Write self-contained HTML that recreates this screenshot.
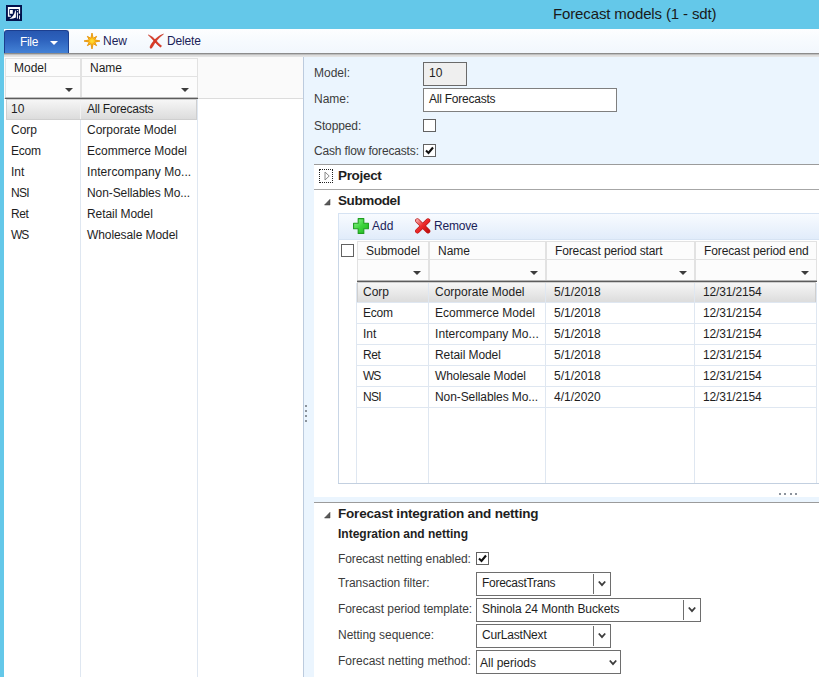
<!DOCTYPE html>
<html><head><meta charset="utf-8"><title>Forecast models (1 - sdt)</title>
<style>
html,body{margin:0;padding:0;}
body{width:819px;height:677px;overflow:hidden;background:#64c8e9;font-family:"Liberation Sans",sans-serif;font-size:12px;color:#1e1e1e;position:relative;}
.a{position:absolute;}
.t{position:absolute;white-space:nowrap;line-height:16px;}
.b{font-weight:bold;}
#title{left:553px;top:5px;font-size:15px;letter-spacing:-0.13px;line-height:18px;color:#1a1a1a;}
#toolbar{left:4px;top:29px;width:815px;height:24px;background:linear-gradient(#fdfeff,#f6fafe 55%,#f2f7fd);}
#tbline{left:4px;top:53px;width:815px;height:5px;background:linear-gradient(#8c8c8c 0,#8c8c8c 20%,#bebebe 20%,#bebebe 40%,#dcdcdc 40%,#dcdcdc 60%,#e2e2e2 60%,#e2e2e2 80%,#e9e9e9 80%);}
#file{left:4px;top:30px;width:65px;height:23px;border-radius:3px 3px 0 0;background:linear-gradient(#2757b0,#2d62bd 40%,#4482d6);border:1px solid #1c3f8f;border-bottom:none;box-sizing:border-box;}
#left{left:4px;top:57px;width:299px;height:620px;background:#fff;}
#lefthdr{left:4px;top:57px;width:299px;height:41px;background:#fafafa;border-bottom:1px solid #dcdcdc;}
#right{left:303px;top:57px;width:516px;height:620px;background:#ebf5fe;border-left:1px solid #bccbde;box-sizing:border-box;}
.hc{position:absolute;background:#fcfcfc;border:1px solid #e2e2e2;box-sizing:border-box;}
.vl{position:absolute;width:1px;background:#dfe7f1;}
.hl{position:absolute;height:1px;background:#dfe7f1;}
.sel{position:absolute;background:linear-gradient(#f6f6f6,#dcdcdc);border:1px solid #cfcfcf;box-sizing:border-box;}
.arr{position:absolute;width:0;height:0;border-left:4px solid transparent;border-right:4px solid transparent;border-top:4px solid #3c3c3c;}
.inp{position:absolute;box-sizing:border-box;border:1px solid #7f7f7f;background:#fff;}
.cb{position:absolute;box-sizing:border-box;width:12px;height:12px;border:1px solid #626262;background:#fff;}
</style></head><body>
<!-- title bar -->
<svg class="a" style="left:6px;top:5px" width="16" height="16" viewBox="0 0 16 16"><rect width="16" height="16" fill="#02124c"/><path d="M1.9 2h12.2v6.8h-1.3V4H3.3v6.5h1.5v1.3H1.9z" fill="#fff"/><rect x="4" y="5" width="2.8" height="3.8" fill="#fff"/><path d="M9.2 5.2 C9.6 5.2 9.9 5.6 9.9 6.2 L9.9 12.4 C8.4 13 6 13.6 3.2 14 C6.6 12.2 8.6 9.4 9.2 5.2Z" fill="#fff"/><circle cx="11.4" cy="5.5" r="0.6" fill="#fff"/><rect x="10.9" y="7.3" width="1" height="6.4" rx="0.4" fill="#fff"/><rect x="13" y="10" width="0.9" height="4.3" rx="0.4" fill="#fff"/></svg>
<div class="t" id="title">Forecast models (1 - sdt)</div>
<!-- toolbar -->
<div class="a" id="toolbar"></div>
<div class="a" id="tbline"></div>
<div class="a" id="file"></div>
<div class="t" style="left:20px;top:34px;letter-spacing:-0.336px;color:#fff;">File</div>
<div class="arr" style="left:50px;top:41px;border-top-color:#fff;"></div>
<svg class="a" style="left:84px;top:33px" width="16" height="16" viewBox="0 0 16 16"><defs><radialGradient id="sg" cx="50%" cy="50%" r="50%"><stop offset="0" stop-color="#ffe23a"/><stop offset="0.35" stop-color="#ffc21a"/><stop offset="0.7" stop-color="#ef9a08"/><stop offset="1" stop-color="#d98400"/></radialGradient></defs><polygon points="8.00,0.00 9.15,5.23 12.67,3.33 10.77,6.85 16.00,8.00 10.77,9.15 12.67,12.67 9.15,10.77 8.00,16.00 6.85,10.77 3.33,12.67 5.23,9.15 0.00,8.00 5.23,6.85 3.33,3.33 6.85,5.23" fill="url(#sg)" stroke="#e8960a" stroke-width="0.9" stroke-linejoin="round"/></svg>
<div class="t" style="left:103px;top:33px;color:#1b2258;">New</div>
<svg class="a" style="left:148px;top:33px" width="16" height="16" viewBox="0 0 16 16"><path d="M0.2,1.9 C3.2,2.6 6.2,5.4 8.4,8 C10.4,10.3 12.2,12 13.6,12.8 L12.6,14.2 C10.4,12.8 8.4,10.7 6.7,8.7 C4.9,6.7 2.7,3.9 0.2,1.9Z" fill="#d93a26" stroke="#c62c1c" stroke-width="0.5"/><path d="M15.5,1.1 C11.2,2.4 7,6 4.4,9.6 C2.9,11.7 1.7,13.8 2.1,14.9 C2.6,15.8 3.9,15 4.6,13.7 C6.4,10.2 10.2,5 15.5,1.1Z" fill="#dc3a25" stroke="#bb2a1b" stroke-width="0.5"/></svg>
<div class="t" style="left:167px;top:33px;letter-spacing:-0.148px;color:#1b2258;">Delete</div>
<!-- left pane -->
<div class="a" id="left"></div>
<div class="a" id="lefthdr"></div>
<div class="hc" style="left:5px;top:58px;width:76px;height:19px;"></div>
<div class="hc" style="left:81px;top:58px;width:117px;height:19px;"></div>
<div class="hc" style="left:5px;top:77px;width:76px;height:21px;border-top:none;"></div>
<div class="hc" style="left:81px;top:77px;width:117px;height:21px;border-top:none;"></div>
<div class="t" style="left:14px;top:60px;">Model</div>
<div class="t" style="left:90px;top:60px;">Name</div>
<div class="arr" style="left:65px;top:88px;"></div>
<div class="arr" style="left:181px;top:88px;"></div>
<div class="vl" style="left:80px;top:99px;height:578px;"></div>
<div class="vl" style="left:197px;top:99px;height:578px;"></div>
<div class="a" style="left:5px;top:97px;width:193px;height:2px;background:linear-gradient(#bdbdbd 50%,#5c5c5c 50%);"></div>
<div class="sel" style="left:6px;top:99px;width:191px;height:21px;"></div>
<div class="a" style="left:80px;top:100px;width:1px;height:19px;background:#f2f2f2;"></div>
<div class="t" style="left:11px;top:101px;">10</div>
<div class="t" style="left:87px;top:101px;letter-spacing:-0.235px;">All Forecasts</div>
<div class="t" style="left:11px;top:122px;letter-spacing:0.009px;">Corp</div>
<div class="t" style="left:87px;top:122px;">Corporate Model</div>
<div class="t" style="left:11px;top:143px;letter-spacing:-0.222px;">Ecom</div>
<div class="t" style="left:87px;top:143px;">Ecommerce Model</div>
<div class="t" style="left:11px;top:164px;">Int</div>
<div class="t" style="left:87px;top:164px;letter-spacing:0.088px;">Intercompany Mo...</div>
<div class="t" style="left:11px;top:185px;letter-spacing:-0.655px;">NSI</div>
<div class="t" style="left:87px;top:185px;letter-spacing:-0.088px;">Non-Sellables Mo...</div>
<div class="t" style="left:11px;top:206px;letter-spacing:-0.462px;">Ret</div>
<div class="t" style="left:87px;top:206px;letter-spacing:-0.075px;">Retail Model</div>
<div class="t" style="left:11px;top:227px;letter-spacing:-1.022px;">WS</div>
<div class="t" style="left:87px;top:227px;letter-spacing:-0.083px;">Wholesale Model</div>
<div class="a" id="right"></div>
<div class="t" style="left:314px;top:65px;color:#3c3c3c;">Model:</div>
<div class="inp" style="left:423px;top:62px;width:44px;height:24px;background:#efefef;border-color:#6a6a6a;"></div>
<div class="t" style="left:429px;top:65px;">10</div>
<div class="t" style="left:314px;top:91px;color:#3c3c3c;">Name:</div>
<div class="inp" style="left:423px;top:88px;width:194px;height:24px;"></div>
<div class="t" style="left:429px;top:91px;letter-spacing:-0.235px;">All Forecasts</div>
<div class="t" style="left:314px;top:118px;letter-spacing:-0.118px;color:#3c3c3c;">Stopped:</div>
<div class="cb" style="left:423px;top:119px;width:13px;height:13px;"></div>
<div class="t" style="left:314px;top:143px;letter-spacing:-0.162px;color:#3c3c3c;">Cash flow forecasts:</div>
<div class="cb" style="left:423px;top:144px;width:13px;height:13px;"></div>
<svg class="a" style="left:423px;top:144px" width="13" height="13" viewBox="0 0 13 13"><path d="M3 6.5 L5.5 9 L10 3.5" fill="none" stroke="#111" stroke-width="2.1"/></svg>
<div class="a" style="left:314px;top:164px;width:505px;height:1px;background:#9b9b9b;"></div>
<div class="a" style="left:314px;top:165px;width:505px;height:332px;background:#fff;"></div>
<div class="a" style="left:319px;top:169px;width:14px;height:14px;box-sizing:border-box;border:1px dotted #222;"></div>
<svg class="a" style="left:319px;top:169px" width="14" height="14" viewBox="0 0 14 14"><path d="M6 3 L10.2 7 L6 11Z" fill="#fff" stroke="#8a8a8a" stroke-width="1"/></svg>
<div class="t b" style="left:338px;top:167.6px;letter-spacing:-0.319px;font-size:13.5px;">Project</div>
<div class="a" style="left:314px;top:189px;width:505px;height:1px;background:#a6a6a6;"></div>
<svg class="a" style="left:324px;top:199px" width="7" height="7" viewBox="0 0 7 7"><path d="M6 0.3 L6 6 L0.5 6Z" fill="#5a5a5a" stroke="#3a3a3a" stroke-width="0.5"/></svg>
<div class="t b" style="left:338px;top:192.6px;letter-spacing:-0.402px;font-size:13.5px;">Submodel</div>
<div class="a" style="left:338px;top:213px;width:481px;height:27px;box-sizing:border-box;border:1px solid #d6e3f3;border-right:none;background:linear-gradient(#f8fbff,#e1ecfa);"></div>
<svg class="a" style="left:353px;top:218px" width="16" height="16" viewBox="0 0 16 16"><defs><linearGradient id="pg" x1="0" y1="0" x2="1" y2="1"><stop offset="0" stop-color="#9af59a"/><stop offset="0.5" stop-color="#3ed63e"/><stop offset="1" stop-color="#1fb51f"/></linearGradient></defs><path d="M5.2 0.6h5.6v4.6h4.6v5.6h-4.6v4.6H5.2v-4.6H0.6V5.2h4.6z" fill="url(#pg)" stroke="#1e9e1e" stroke-width="1.1" stroke-linejoin="round"/></svg>
<div class="t" style="left:372px;top:218px;color:#1b2258;">Add</div>
<svg class="a" style="left:414px;top:218px" width="17" height="16" viewBox="0 0 17 16"><defs><linearGradient id="xg" x1="0" y1="0" x2="1" y2="1"><stop offset="0" stop-color="#f59a9a"/><stop offset="0.45" stop-color="#ee2a2a"/><stop offset="1" stop-color="#c41010"/></linearGradient></defs><g fill="none" stroke-linecap="round"><path d="M3.4 2.6L14 13.2M14 2.6L3.4 13.2" stroke="#b81818" stroke-width="4.6"/><path d="M3.4 2.6L14 13.2M14 2.6L3.4 13.2" stroke="url(#xg)" stroke-width="3.4"/></g></svg>
<div class="t" style="left:434px;top:218px;letter-spacing:-0.190px;color:#1b2258;">Remove</div>
<div class="vl" style="left:338px;top:240px;height:243px;background:#c9d6e6;"></div>
<div class="cb" style="left:341px;top:244px;width:13px;height:13px;"></div>
<div class="hc" style="left:357px;top:241px;width:72px;height:19px;"></div>
<div class="hc" style="left:357px;top:260px;width:72px;height:21px;border-top:none;"></div>
<div class="t" style="left:366px;top:243px;">Submodel</div>
<div class="arr" style="left:413px;top:271px;"></div>
<div class="hc" style="left:429px;top:241px;width:117px;height:19px;"></div>
<div class="hc" style="left:429px;top:260px;width:117px;height:21px;border-top:none;"></div>
<div class="t" style="left:438px;top:243px;">Name</div>
<div class="arr" style="left:530px;top:271px;"></div>
<div class="hc" style="left:546px;top:241px;width:149px;height:19px;"></div>
<div class="hc" style="left:546px;top:260px;width:149px;height:21px;border-top:none;"></div>
<div class="t" style="left:555px;top:243px;letter-spacing:-0.126px;">Forecast period start</div>
<div class="arr" style="left:679px;top:271px;"></div>
<div class="hc" style="left:695px;top:241px;width:122px;height:19px;"></div>
<div class="hc" style="left:695px;top:260px;width:122px;height:21px;border-top:none;"></div>
<div class="t" style="left:704px;top:243px;letter-spacing:-0.115px;">Forecast period end</div>
<div class="arr" style="left:801px;top:271px;"></div>
<div class="a" style="left:357px;top:280px;width:460px;height:2px;background:linear-gradient(#b4b4b4 50%,#5c5c5c 50%);"></div>
<div class="sel" style="left:357px;top:282px;width:459px;height:21px;"></div>
<div class="vl" style="left:356px;top:283px;height:200px;"></div>
<div class="vl" style="left:428px;top:283px;height:200px;"></div>
<div class="vl" style="left:545px;top:283px;height:200px;"></div>
<div class="vl" style="left:694px;top:283px;height:200px;"></div>
<div class="vl" style="left:816px;top:283px;height:200px;"></div>
<div class="hl" style="left:357px;top:302px;width:460px;"></div>
<div class="hl" style="left:357px;top:323px;width:460px;"></div>
<div class="hl" style="left:357px;top:344px;width:460px;"></div>
<div class="hl" style="left:357px;top:365px;width:460px;"></div>
<div class="hl" style="left:357px;top:386px;width:460px;"></div>
<div class="hl" style="left:357px;top:407px;width:460px;"></div>
<div class="hl" style="left:338px;top:483px;width:481px;background:#c3d0e0;"></div>
<div class="t" style="left:363px;top:284px;letter-spacing:0.009px;">Corp</div>
<div class="t" style="left:435px;top:284px;letter-spacing:0.011px;">Corporate Model</div>
<div class="t" style="left:554px;top:284px;">5/1/2018</div>
<div class="t" style="left:703px;top:284px;letter-spacing:-0.146px;">12/31/2154</div>
<div class="t" style="left:363px;top:305px;letter-spacing:-0.222px;">Ecom</div>
<div class="t" style="left:435px;top:305px;">Ecommerce Model</div>
<div class="t" style="left:554px;top:305px;">5/1/2018</div>
<div class="t" style="left:703px;top:305px;letter-spacing:-0.146px;">12/31/2154</div>
<div class="t" style="left:363px;top:326px;">Int</div>
<div class="t" style="left:435px;top:326px;letter-spacing:0.060px;">Intercompany Mo...</div>
<div class="t" style="left:554px;top:326px;">5/1/2018</div>
<div class="t" style="left:703px;top:326px;letter-spacing:-0.146px;">12/31/2154</div>
<div class="t" style="left:363px;top:347px;letter-spacing:-0.462px;">Ret</div>
<div class="t" style="left:435px;top:347px;letter-spacing:-0.075px;">Retail Model</div>
<div class="t" style="left:554px;top:347px;">5/1/2018</div>
<div class="t" style="left:703px;top:347px;letter-spacing:-0.146px;">12/31/2154</div>
<div class="t" style="left:363px;top:368px;letter-spacing:-1.022px;">WS</div>
<div class="t" style="left:435px;top:368px;letter-spacing:-0.083px;">Wholesale Model</div>
<div class="t" style="left:554px;top:368px;">5/1/2018</div>
<div class="t" style="left:703px;top:368px;letter-spacing:-0.146px;">12/31/2154</div>
<div class="t" style="left:363px;top:389px;letter-spacing:-0.655px;">NSI</div>
<div class="t" style="left:435px;top:389px;letter-spacing:-0.088px;">Non-Sellables Mo...</div>
<div class="t" style="left:554px;top:389px;">4/1/2020</div>
<div class="t" style="left:703px;top:389px;letter-spacing:-0.146px;">12/31/2154</div>
<div class="a" style="left:779px;top:493px;width:2px;height:2px;background:#8c939c;"></div>
<div class="a" style="left:784px;top:493px;width:2px;height:2px;background:#8c939c;"></div>
<div class="a" style="left:790px;top:493px;width:2px;height:2px;background:#8c939c;"></div>
<div class="a" style="left:795px;top:493px;width:2px;height:2px;background:#8c939c;"></div>
<div class="a" style="left:305px;top:405px;width:2px;height:2px;background:#8c939c;"></div>
<div class="a" style="left:305px;top:410px;width:2px;height:2px;background:#8c939c;"></div>
<div class="a" style="left:305px;top:415px;width:2px;height:2px;background:#8c939c;"></div>
<div class="a" style="left:305px;top:420px;width:2px;height:2px;background:#8c939c;"></div>
<div class="a" style="left:314px;top:502px;width:505px;height:1px;background:#9b9b9b;"></div>
<div class="a" style="left:314px;top:503px;width:505px;height:174px;background:#fff;"></div>
<svg class="a" style="left:324px;top:512px" width="7" height="7" viewBox="0 0 7 7"><path d="M6 0.3 L6 6 L0.5 6Z" fill="#5a5a5a" stroke="#3a3a3a" stroke-width="0.5"/></svg>
<div class="t b" style="left:338px;top:506px;letter-spacing:-0.186px;font-size:13.5px;">Forecast integration and netting</div>
<div class="t b" style="left:338px;top:526px;">Integration and netting</div>
<div class="t" style="left:338px;top:551px;letter-spacing:-0.105px;color:#3c3c3c;">Forecast netting enabled:</div>
<div class="cb" style="left:476px;top:552px;width:13px;height:13px;"></div>
<svg class="a" style="left:476px;top:552px" width="13" height="13" viewBox="0 0 13 13"><path d="M3 6.5 L5.5 9 L10 3.5" fill="none" stroke="#111" stroke-width="2.1"/></svg>
<div class="t" style="left:338px;top:575px;color:#3c3c3c;">Transaction filter:</div>
<div class="inp" style="left:476px;top:572px;width:135px;height:24px;border-color:#6e6e6e;"></div>
<div class="t" style="left:482px;top:575px;letter-spacing:-0.279px;">ForecastTrans</div>
<div class="a" style="left:593px;top:574px;width:1px;height:20px;background:#6e6e6e;"></div>
<svg class="a" style="left:597px;top:580px" width="10" height="8" viewBox="0 0 10 8"><path d="M1.8 1.5 L5 5.2 L8.2 1.5" fill="none" stroke="#3c3c3c" stroke-width="1.8"/></svg>
<div class="t" style="left:338px;top:601px;letter-spacing:-0.081px;color:#3c3c3c;">Forecast period template:</div>
<div class="inp" style="left:476px;top:598px;width:225px;height:24px;border-color:#6e6e6e;"></div>
<div class="t" style="left:482px;top:601px;letter-spacing:-0.078px;">Shinola 24 Month Buckets</div>
<div class="a" style="left:683px;top:600px;width:1px;height:20px;background:#6e6e6e;"></div>
<svg class="a" style="left:687px;top:606px" width="10" height="8" viewBox="0 0 10 8"><path d="M1.8 1.5 L5 5.2 L8.2 1.5" fill="none" stroke="#3c3c3c" stroke-width="1.8"/></svg>
<div class="t" style="left:338px;top:627px;letter-spacing:-0.040px;color:#3c3c3c;">Netting sequence:</div>
<div class="inp" style="left:476px;top:624px;width:135px;height:24px;border-color:#6e6e6e;"></div>
<div class="t" style="left:482px;top:627px;letter-spacing:-0.196px;">CurLastNext</div>
<div class="a" style="left:593px;top:626px;width:1px;height:20px;background:#6e6e6e;"></div>
<svg class="a" style="left:597px;top:632px" width="10" height="8" viewBox="0 0 10 8"><path d="M1.8 1.5 L5 5.2 L8.2 1.5" fill="none" stroke="#3c3c3c" stroke-width="1.8"/></svg>
<div class="t" style="left:338px;top:653px;color:#3c3c3c;">Forecast netting method:</div>
<div class="inp" style="left:476px;top:650px;width:145px;height:24px;border-color:#6e6e6e;"></div>
<div class="t" style="left:480px;top:655px;">All periods</div>
<svg class="a" style="left:608px;top:659px" width="10" height="8" viewBox="0 0 10 8"><path d="M1.8 1.5 L5 5.2 L8.2 1.5" fill="none" stroke="#3c3c3c" stroke-width="1.8"/></svg>
</body></html>
